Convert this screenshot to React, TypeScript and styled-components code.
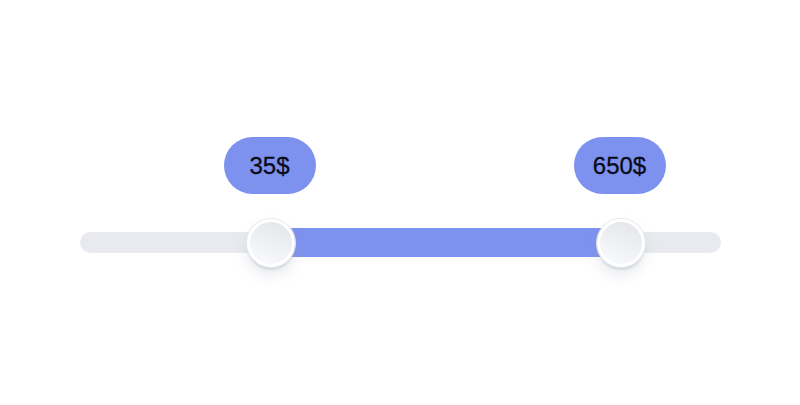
import React from "react";
import styled, { createGlobalStyle } from "styled-components";

const GlobalStyle = createGlobalStyle`
  html, body {
    margin: 0;
    padding: 0;
    background: #ffffff;
  }
  body {
    font-family: "Liberation Sans", Arial, sans-serif;
  }
`;

const Page = styled.div`
  width: 800px;
  height: 405px;
  display: flex;
  justify-content: center;
  align-items: flex-start;
  padding-top: 232px;
  box-sizing: border-box;
  background: #ffffff;
`;

const Track = styled.div`
  position: relative;
  width: 641px;
  height: 21px;
  border-radius: 11px;
  background: #e8eaef;
`;

const Range = styled.div<{ $from: string; $span: string }>`
  position: absolute;
  top: -4px;
  left: ${(p) => p.$from};
  width: ${(p) => p.$span};
  height: 29px;
  background: #7d92ee;
`;

const Thumb = styled.div<{ $at: string }>`
  position: absolute;
  top: 50%;
  left: ${(p) => p.$at};
  width: 48px;
  height: 48px;
  box-sizing: border-box;
  border-radius: 50%;
  transform: translate(-50%, -50%);
  border: 3px solid #ffffff;
  background: linear-gradient(200deg, #e2e4e9 0%, #edeff2 45%, #fafbfc 100%);
  box-shadow:
    0 0 0 1px #e4e6ea,
    0 3px 2px rgba(170, 175, 190, 0.35),
    0 8px 14px rgba(150, 158, 180, 0.22);
`;

const Bubble = styled.div<{ $at: string }>`
  position: absolute;
  top: -95px;
  left: ${(p) => p.$at};
  width: 92px;
  height: 57px;
  transform: translateX(-50%);
  border-radius: 29px;
  background: #7d92ee;
  display: flex;
  align-items: center;
  justify-content: center;
  color: #0a0b16;
  font-family: "Liberation Sans", Arial, sans-serif;
  font-size: 24px;
  -webkit-text-stroke: 0.3px #0a0b16;
`;

const TRACK_WIDTH = 641;

type Handle = { label: string; x: number };

const handles: Handle[] = [
  { label: "35$", x: 191 },
  { label: "650$", x: 541 },
];

const pct = (x: number) => `${(x / TRACK_WIDTH) * 100}%`;

export default function App() {
  const [low, high] = handles;
  return (
    <>
      <GlobalStyle />
      <Page>
        <Track>
          <Range $from={pct(low.x)} $span={pct(high.x - low.x)} />
          {handles.map((h) => (
            <React.Fragment key={h.label}>
              <Bubble $at={pct(h.x - 1)}>{h.label}</Bubble>
              <Thumb $at={pct(h.x)} />
            </React.Fragment>
          ))}
        </Track>
      </Page>
    </>
  );
}
